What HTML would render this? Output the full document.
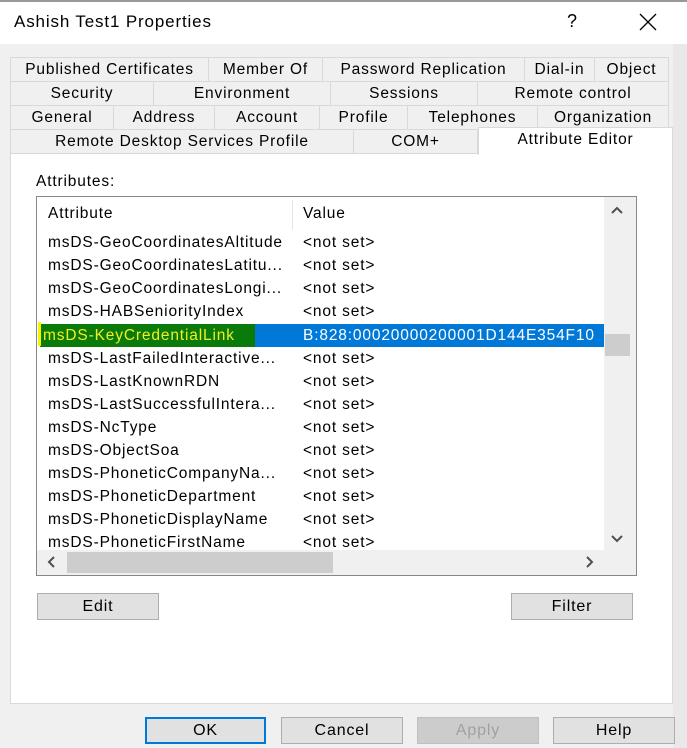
<!DOCTYPE html>
<html><head><style>
body{margin:0;width:687px;height:748px;background:#f0f0f0;font-family:"Liberation Sans",sans-serif;font-size:15.5px;letter-spacing:0.85px;color:#000;position:relative;overflow:hidden}
.a{position:absolute}
.tab{position:absolute;height:24px;border:1px solid #d9d9d9;border-bottom:none;background:#f0f0f0;box-sizing:border-box;text-align:center;line-height:23px;white-space:nowrap}
.row{position:absolute;left:40px;width:564px;height:23px;line-height:23px;white-space:nowrap}
.row span{position:absolute;left:8px}
.row b{font-weight:normal;position:absolute;left:263px}
.btn{position:absolute;height:27px;border:1px solid #adadad;background:#e1e1e1;box-sizing:border-box;text-align:center;line-height:25px;font-size:16px}
</style></head><body>
<div class="a" style="left:0;top:0;width:687px;height:44px;background:#fff"></div>
<div class="a" style="left:0;top:0;width:687px;height:2px;background:#999"></div>
<div class="a" style="left:673px;top:44px;width:14px;height:704px;background:#e8e8e8"></div>
<div class="a" style="left:14px;top:12px;font-size:17px">Ashish Test1 Properties</div>
<div class="a" style="left:567px;top:11px;font-size:18px">?</div>
<svg class="a" style="left:638px;top:12px" width="20" height="20"><path d="M2 2L18 18M18 2L2 18" stroke="#000" stroke-width="1.3"/></svg>

<div class="tab" style="left:10px;top:57px;width:199px">Published Certificates</div>
<div class="tab" style="left:208px;top:57px;width:115px">Member Of</div>
<div class="tab" style="left:322px;top:57px;width:203px">Password Replication</div>
<div class="tab" style="left:524px;top:57px;width:71px">Dial-in</div>
<div class="tab" style="left:594px;top:57px;width:75px">Object</div>

<div class="tab" style="left:10px;top:81px;width:144px">Security</div>
<div class="tab" style="left:153px;top:81px;width:178px">Environment</div>
<div class="tab" style="left:330px;top:81px;width:148px">Sessions</div>
<div class="tab" style="left:477px;top:81px;width:192px">Remote control</div>

<div class="tab" style="left:10px;top:105px;width:104px">General</div>
<div class="tab" style="left:113px;top:105px;width:102px">Address</div>
<div class="tab" style="left:214px;top:105px;width:106px">Account</div>
<div class="tab" style="left:319px;top:105px;width:89px">Profile</div>
<div class="tab" style="left:407px;top:105px;width:131px">Telephones</div>
<div class="tab" style="left:537px;top:105px;width:132px">Organization</div>

<div class="tab" style="left:10px;top:129px;width:344px;height:25px">Remote Desktop Services Profile</div>
<div class="tab" style="left:353px;top:129px;width:125px;height:25px">COM+</div>

<div class="a" style="left:10px;top:153px;width:663px;height:551px;background:#fff;border:1px solid #d9d9d9;box-sizing:border-box"></div>
<div class="a" style="left:478px;top:127px;width:195px;height:28px;background:#fff;border:1px solid #d9d9d9;border-bottom:none;box-sizing:border-box;text-align:center;line-height:24px">Attribute Editor</div>

<div class="a" style="left:36px;top:173px">Attributes:</div>
<div class="a" style="left:36px;top:196px;width:601px;height:380px;border:1px solid #828790;box-sizing:border-box;background:#fff;overflow:hidden"></div>
<div class="a" style="left:48px;top:205px">Attribute</div>
<div class="a" style="left:292px;top:200px;width:1px;height:30px;background:#e5e5e5"></div>
<div class="a" style="left:303px;top:205px">Value</div>

<div class="row" style="top:231px"><span>msDS-GeoCoordinatesAltitude</span><b>&lt;not set&gt;</b></div>
<div class="row" style="top:254px"><span>msDS-GeoCoordinatesLatitu...</span><b>&lt;not set&gt;</b></div>
<div class="row" style="top:277px"><span>msDS-GeoCoordinatesLongi...</span><b>&lt;not set&gt;</b></div>
<div class="row" style="top:300px"><span>msDS-HABSeniorityIndex</span><b>&lt;not set&gt;</b></div>
<div class="row" style="top:324px;background:#0078d7;color:#fff;overflow:hidden"><div class="a" style="left:0;top:0;width:215px;height:23px;background:#0a7a0a"></div><span style="color:#f0f020;left:3px">msDS-KeyCredentialLink</span><b>B:828:00020000200001D144E354F10</b></div>
<div class="a" style="left:38px;top:322px;width:3px;height:24px;background:#f5f500"></div>
<div class="row" style="top:347px"><span>msDS-LastFailedInteractive...</span><b>&lt;not set&gt;</b></div>
<div class="row" style="top:370px"><span>msDS-LastKnownRDN</span><b>&lt;not set&gt;</b></div>
<div class="row" style="top:393px"><span>msDS-LastSuccessfulIntera...</span><b>&lt;not set&gt;</b></div>
<div class="row" style="top:416px"><span>msDS-NcType</span><b>&lt;not set&gt;</b></div>
<div class="row" style="top:439px"><span>msDS-ObjectSoa</span><b>&lt;not set&gt;</b></div>
<div class="row" style="top:462px"><span>msDS-PhoneticCompanyNa...</span><b>&lt;not set&gt;</b></div>
<div class="row" style="top:485px"><span>msDS-PhoneticDepartment</span><b>&lt;not set&gt;</b></div>
<div class="row" style="top:508px"><span>msDS-PhoneticDisplayName</span><b>&lt;not set&gt;</b></div>
<div class="row" style="top:531px"><span>msDS-PhoneticFirstName</span><b>&lt;not set&gt;</b></div>

<div class="a" style="left:604px;top:197px;width:32px;height:353px;background:#f0f0f0"></div>
<div class="a" style="left:605px;top:334px;width:25px;height:22px;background:#cdcdcd"></div>
<svg class="a" style="left:610px;top:205px" width="14" height="10"><path d="M2 8L7 3L12 8" stroke="#505050" stroke-width="2" fill="none"/></svg>
<svg class="a" style="left:610px;top:534px" width="14" height="10"><path d="M2 2L7 7L12 2" stroke="#505050" stroke-width="2" fill="none"/></svg>
<div class="a" style="left:37px;top:550px;width:599px;height:25px;background:#f0f0f0"></div>
<div class="a" style="left:67px;top:552px;width:266px;height:21px;background:#cdcdcd"></div>
<svg class="a" style="left:46px;top:555px" width="10" height="14"><path d="M8 2L3 7L8 12" stroke="#505050" stroke-width="2" fill="none"/></svg>
<svg class="a" style="left:585px;top:555px" width="10" height="14"><path d="M2 2L7 7L2 12" stroke="#505050" stroke-width="2" fill="none"/></svg>

<div class="btn" style="left:37px;top:593px;width:122px">Edit</div>
<div class="btn" style="left:511px;top:593px;width:122px">Filter</div>

<div class="btn" style="left:145px;top:717px;width:121px;border:2px solid #0078d7;line-height:23px">OK</div>
<div class="btn" style="left:281px;top:717px;width:122px">Cancel</div>
<div class="btn" style="left:417px;top:717px;width:122px;color:#a0a0a0;background:#ccc;border-color:#bfbfbf">Apply</div>
<div class="btn" style="left:553px;top:717px;width:122px">Help</div>
</body></html>
